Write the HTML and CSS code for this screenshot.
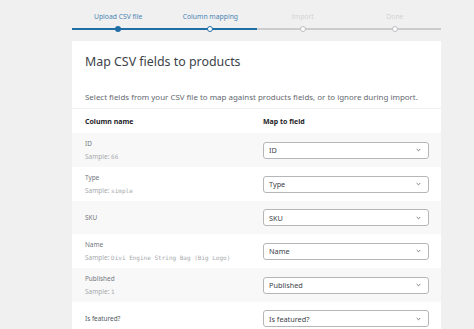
FILE: index.html
```html
<!DOCTYPE html>
<html lang="en">
<head>
<meta charset="utf-8">
<title>Map CSV fields to products</title>
<link rel="stylesheet" href="styles.css">
</head>
<body>
<div class="page">
  <ol class="steps">
    <li class="step done"><span class="step-label">Upload CSV file</span><span class="track"><span class="dot"></span></span></li>
    <li class="step active"><span class="step-label">Column mapping</span><span class="track"><span class="dot"></span></span></li>
    <li class="step"><span class="step-label">Import</span><span class="track"><span class="dot"></span></span></li>
    <li class="step"><span class="step-label">Done</span><span class="track"><span class="dot"></span></span></li>
  </ol>

  <section class="card">
    <header class="card-head">
      <h1>Map CSV fields to products</h1>
      <p>Select fields from your CSV file to map against products fields, or to ignore during import.</p>
    </header>

    <div class="table">
      <div class="row row-head">
        <div class="col-name">Column name</div>
        <div class="col-map">Map to field</div>
      </div>

      <div class="row striped">
        <div class="col-name"><div class="label">ID</div><div class="sample">Sample: <code>66</code></div></div>
        <div class="col-map"><div class="select"><span>ID</span><svg class="chev" viewBox="0 0 6 4" width="5" height="4"><path d="M0.8 0.8 L3 3 L5.2 0.8" /></svg></div></div>
      </div>

      <div class="row">
        <div class="col-name"><div class="label">Type</div><div class="sample">Sample: <code>simple</code></div></div>
        <div class="col-map"><div class="select"><span>Type</span><svg class="chev" viewBox="0 0 6 4" width="5" height="4"><path d="M0.8 0.8 L3 3 L5.2 0.8" /></svg></div></div>
      </div>

      <div class="row striped">
        <div class="col-name"><div class="label">SKU</div></div>
        <div class="col-map"><div class="select"><span>SKU</span><svg class="chev" viewBox="0 0 6 4" width="5" height="4"><path d="M0.8 0.8 L3 3 L5.2 0.8" /></svg></div></div>
      </div>

      <div class="row">
        <div class="col-name"><div class="label">Name</div><div class="sample">Sample: <code>Divi Engine String Bag (Big Logo)</code></div></div>
        <div class="col-map"><div class="select"><span>Name</span><svg class="chev" viewBox="0 0 6 4" width="5" height="4"><path d="M0.8 0.8 L3 3 L5.2 0.8" /></svg></div></div>
      </div>

      <div class="row striped">
        <div class="col-name"><div class="label">Published</div><div class="sample">Sample: <code>1</code></div></div>
        <div class="col-map"><div class="select"><span>Published</span><svg class="chev" viewBox="0 0 6 4" width="5" height="4"><path d="M0.8 0.8 L3 3 L5.2 0.8" /></svg></div></div>
      </div>

      <div class="row">
        <div class="col-name"><div class="label dark">Is featured?</div></div>
        <div class="col-map"><div class="select"><span>Is featured?</span><svg class="chev" viewBox="0 0 6 4" width="5" height="4"><path d="M0.8 0.8 L3 3 L5.2 0.8" /></svg></div></div>
      </div>
    </div>
  </section>
</div>
</body>
</html>
```

FILE: styles.css
```css
html, body {
  margin: 0;
  padding: 0;
  height: 100%;
  overflow: hidden;
}

body {
  background: #f0f0f1;
  font-family: "Noto Sans", "Open Sans", "Liberation Sans", sans-serif;
  color: #3c434a;
}

.page {
  width: 369px;
  margin-left: 72px;
}

/* Progress steps */
.steps {
  list-style: none;
  margin: 0;
  padding: 12px 0 0;
  display: flex;
}

.step {
  flex: 1;
  display: flex;
  flex-direction: column;
  align-items: stretch;
}

.step-label {
  display: block;
  text-align: center;
  font-size: 6.8px;
  line-height: 10px;
  height: 10px;
  color: #d2d3d5;
}

.step.done .step-label,
.step.active .step-label {
  color: #4a84b2;
}

.track {
  margin-top: 6px;
  height: 2px;
  background: #cbcccd;
  display: flex;
  justify-content: center;
  align-items: center;
}

.step.done .track,
.step.active .track {
  background: #1f6fa6;
}

.dot {
  flex: none;
  width: 4px;
  height: 4px;
  border-radius: 50%;
  background: #fff;
  border: 1.5px solid #bdbec0;
}

.step.done .dot {
  width: 6px;
  height: 6px;
  border: 0;
  background: #1f6fa6;
}

.step.active .dot {
  border-color: #1f6fa6;
}

/* Card */
.card {
  margin-top: 11px;
  background: #fff;
}

.card-head {
  padding: 11px 13px 4.5px;
  border-bottom: 1px solid #f0f0f0;
}

.card-head h1 {
  margin: 0;
  font-size: 12.4px;
  line-height: 20px;
  font-weight: 400;
  color: #3c434a;
}

.card-head p {
  margin: 18.5px 0 0;
  font-size: 7.95px;
  line-height: 13px;
  color: #646970;
}

/* Table */
.row {
  display: grid;
  grid-template-columns: 1fr 166px;
  align-items: center;
  padding: 4px 12px 4px 13px;
}

.row.striped {
  background: #f8f8f8;
}

.row-head {
  height: 24px;
  padding-top: 0;
  padding-bottom: 0;
  font-size: 7px;
  font-weight: 700;
  color: #1d2327;
}

.label {
  font-size: 6.4px;
  line-height: 13px;
  color: #72777c;
}

.label.dark {
  color: #50575e;
}

.sample {
  font-size: 6.5px;
  line-height: 13px;
  color: #a7aaad;
}

.sample code {
  font-family: "DejaVu Sans Mono", "Liberation Mono", monospace;
  font-size: 6px;
  color: #a7aaad;
}

.col-map {
  padding: 4px 0;
}

.select {
  box-sizing: border-box;
  height: 17px;
  border: 1px solid #b4b7ba;
  border-radius: 3px;
  background: #fff;
  display: flex;
  align-items: center;
  justify-content: space-between;
  padding: 0 7px 0 5px;
  font-size: 7.3px;
  color: #3c434a;
}

.chev {
  display: block;
}

.chev path {
  fill: none;
  stroke: #6c7176;
  stroke-width: 1.1;
}
```
